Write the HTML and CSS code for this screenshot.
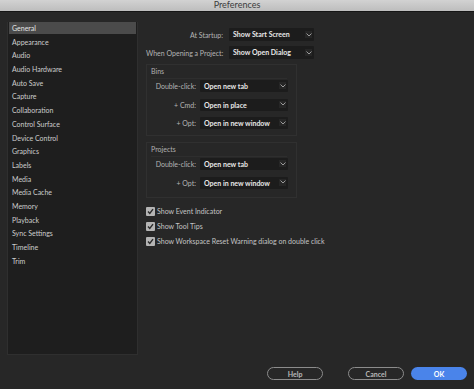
FILE: index.html
```html
<!DOCTYPE html>
<html lang="en">
<head>
    <meta charset="UTF-8">
    <title>Preferences</title>
    <link rel="stylesheet" href="styles.css">
</head>
<body>
    <div class="window">
        <div class="titlebar">Preferences</div>

        <div class="main">
            <ul class="sidebar">
                <li class="active">General</li>
                <li>Appearance</li>
                <li>Audio</li>
                <li>Audio Hardware</li>
                <li>Auto Save</li>
                <li>Capture</li>
                <li>Collaboration</li>
                <li>Control Surface</li>
                <li>Device Control</li>
                <li>Graphics</li>
                <li>Labels</li>
                <li>Media</li>
                <li>Media Cache</li>
                <li>Memory</li>
                <li>Playback</li>
                <li>Sync Settings</li>
                <li>Timeline</li>
                <li>Trim</li>
            </ul>

            <div class="panel">
                <div class="top-rows">
                    <span class="label">At Startup:</span>
                    <div class="select wide">Show Start Screen<span class="chev"><svg width="6" height="4" viewBox="0 0 6 4"><path d="M0.5 0.5 L3 3 L5.5 0.5" fill="none" stroke="#9a9a9a" stroke-width="1"/></svg></span></div>
                    <span class="label">When Opening a Project:</span>
                    <div class="select wide">Show Open Dialog<span class="chev"><svg width="6" height="4" viewBox="0 0 6 4"><path d="M0.5 0.5 L3 3 L5.5 0.5" fill="none" stroke="#9a9a9a" stroke-width="1"/></svg></span></div>
                </div>

                <div class="group bins">
                    <div class="group-title">Bins</div>
                    <div class="group-rows">
                        <span class="label">Double-click:</span>
                        <div class="select">Open new tab<span class="chev"><svg width="6" height="4" viewBox="0 0 6 4"><path d="M0.5 0.5 L3 3 L5.5 0.5" fill="none" stroke="#9a9a9a" stroke-width="1"/></svg></span></div>
                        <span class="label">+ Cmd:</span>
                        <div class="select">Open in place<span class="chev"><svg width="6" height="4" viewBox="0 0 6 4"><path d="M0.5 0.5 L3 3 L5.5 0.5" fill="none" stroke="#9a9a9a" stroke-width="1"/></svg></span></div>
                        <span class="label">+ Opt:</span>
                        <div class="select">Open in new window<span class="chev"><svg width="6" height="4" viewBox="0 0 6 4"><path d="M0.5 0.5 L3 3 L5.5 0.5" fill="none" stroke="#9a9a9a" stroke-width="1"/></svg></span></div>
                    </div>
                </div>

                <div class="group projects">
                    <div class="group-title">Projects</div>
                    <div class="group-rows">
                        <span class="label">Double-click:</span>
                        <div class="select">Open new tab<span class="chev"><svg width="6" height="4" viewBox="0 0 6 4"><path d="M0.5 0.5 L3 3 L5.5 0.5" fill="none" stroke="#9a9a9a" stroke-width="1"/></svg></span></div>
                        <span class="label">+ Opt:</span>
                        <div class="select">Open in new window<span class="chev"><svg width="6" height="4" viewBox="0 0 6 4"><path d="M0.5 0.5 L3 3 L5.5 0.5" fill="none" stroke="#9a9a9a" stroke-width="1"/></svg></span></div>
                    </div>
                </div>

                <div class="checks">
                    <label class="check"><span class="box"><svg width="9" height="9" viewBox="0 0 9 9"><path d="M2 4.5 L3.8 6.5 L7 2.2" fill="none" stroke="#2a2a2a" stroke-width="1.4"/></svg></span>Show Event Indicator</label>
                    <label class="check"><span class="box"><svg width="9" height="9" viewBox="0 0 9 9"><path d="M2 4.5 L3.8 6.5 L7 2.2" fill="none" stroke="#2a2a2a" stroke-width="1.4"/></svg></span>Show Tool Tips</label>
                    <label class="check"><span class="box"><svg width="9" height="9" viewBox="0 0 9 9"><path d="M2 4.5 L3.8 6.5 L7 2.2" fill="none" stroke="#2a2a2a" stroke-width="1.4"/></svg></span>Show Workspace Reset Warning dialog on double click</label>
                </div>
            </div>
        </div>

        <div class="footer">
            <button class="btn">Help</button>
            <button class="btn cancel">Cancel</button>
            <button class="btn ok">OK</button>
        </div>
    </div>
</body>
</html>
```

FILE: styles.css
```css
body, html {
    margin: 0;
    padding: 0;
    width: 100%;
    height: 100%;
    background-color: #272727;
    font-family: Lato, "Open Sans", sans-serif;
    font-size: 7px;
    overflow: hidden;
}

.window {
    display: flex;
    flex-direction: column;
    height: 389px;
}

.titlebar {
    height: 11px;
    line-height: 10px;
    text-align: center;
    font-size: 9px;
    color: #3c3c3c;
    background: linear-gradient(#d2d2d2, #bdbdbd);
    border-bottom: 1px solid #151515;
}

.main {
    display: flex;
    padding: 10px 0 0 7px;
    height: 333px;
}

.sidebar {
    list-style: none;
    margin: 0;
    padding: 0 1px;
    width: 131px;
    height: 333px;
    box-sizing: border-box;
    background-color: #1e1e1e;
    border: 1px solid #2f2f2f;
    border-top: none;
    color: #cdcdcd;
}

.sidebar li {
    height: 13.7px;
    line-height: 13px;
    padding-left: 3px;
}

.sidebar li.active {
    background-color: #4b4b4b;
    color: #e4e4e4;
    height: 12px;
    line-height: 12px;
    margin-bottom: 1.7px;
}

.panel {
    margin-left: 8px;
    padding-top: 6px;
    display: flex;
    flex-direction: column;
}

.label {
    color: #b5b5b5;
    text-align: right;
    white-space: nowrap;
}

.top-rows {
    display: grid;
    grid-template-columns: 77px 85px;
    column-gap: 6px;
    row-gap: 5px;
    align-items: center;
}

.select {
    position: relative;
    height: 13px;
    line-height: 13px;
    padding-left: 4px;
    background-color: #1c1c1c;
    color: #e8e8e8;
    font-weight: 700;
    box-sizing: border-box;
    border-radius: 1px;
    white-space: nowrap;
}

.chev {
    position: absolute;
    right: 2px;
    top: 3px;
    width: 7px;
    height: 7px;
    background-color: #262626;
    display: flex;
    align-items: center;
    justify-content: center;
}

.group {
    margin-top: 5px;
    width: 151px;
    box-sizing: border-box;
    border: 1px solid #303030;
    padding: 2px 9px 5px 4px;
}

.group-title {
    color: #b0b0b0;
    height: 9px;
    line-height: 9px;
}

.group-rows {
    margin-top: 2px;
    display: grid;
    grid-template-columns: 45px 88px;
    column-gap: 4px;
    row-gap: 6.5px;
    align-items: center;
    border-top: 1px solid #2e2e2e;
    padding-top: 1px;
}

.group-rows .select {
    height: 12px;
    line-height: 12px;
}

.group-rows .chev {
    top: 2px;
}

.bins {
    height: 72px;
}

.projects {
    margin-top: 6px;
    height: 56px;
}

.checks {
    margin-top: 8px;
    display: flex;
    flex-direction: column;
    gap: 5px;
}

.check {
    display: flex;
    align-items: center;
    gap: 2px;
    color: #c4c4c4;
    height: 10px;
}

.box {
    width: 9px;
    height: 9px;
    background-color: #b4b4b4;
    border-radius: 1px;
    display: flex;
}

.footer {
    display: flex;
    justify-content: flex-end;
    padding: 12px 7px 0 0;
}

.btn {
    width: 56px;
    height: 13px;
    box-sizing: border-box;
    border: 1px solid #8c8c8c;
    border-radius: 7px;
    background: transparent;
    color: #b8b8b8;
    font-family: Lato, sans-serif;
    font-size: 7px;
    font-weight: 700;
    padding: 0;
}

.cancel {
    margin-left: 25px;
}

.ok {
    margin-left: 7px;
    border: none;
    background-color: #4a84ea;
    color: #ffffff;
}
```
